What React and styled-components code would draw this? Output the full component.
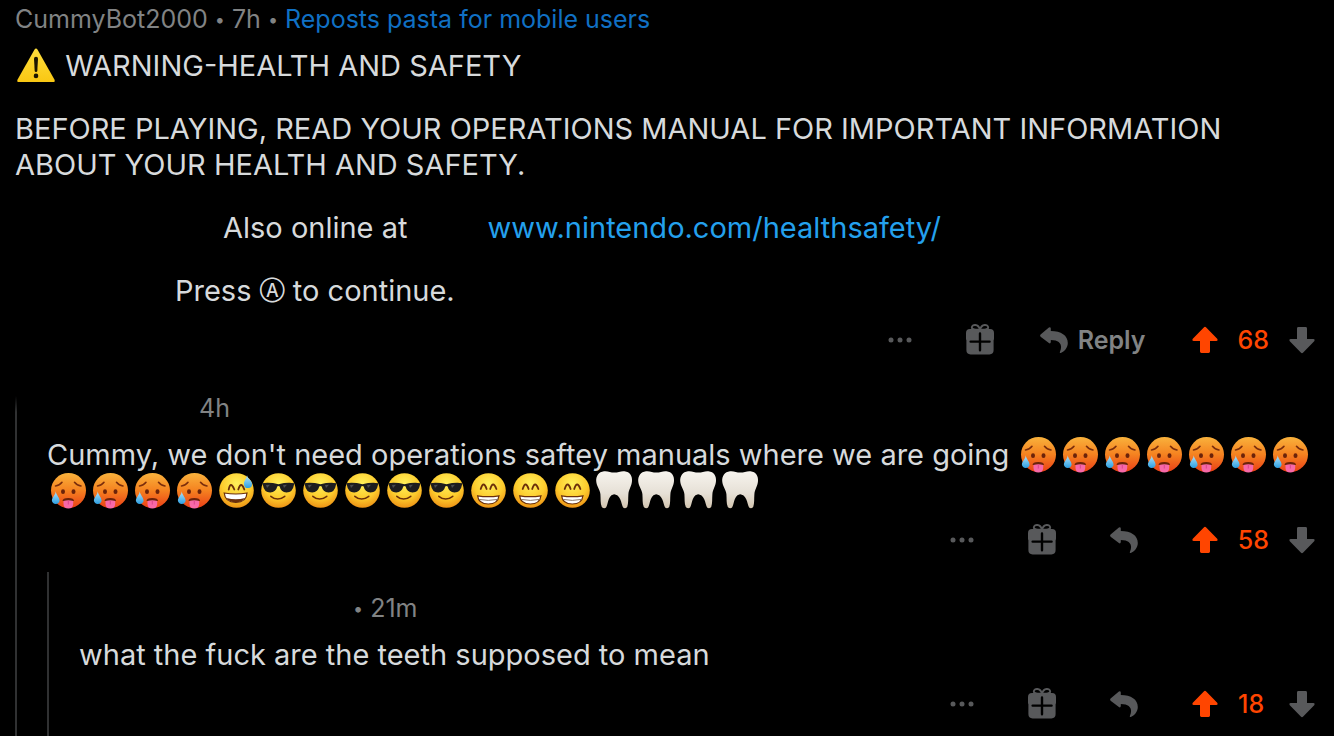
/* eslint-disable react/prop-types */
import React from "react";
import styled, { createGlobalStyle } from "styled-components";

const GlobalStyle = createGlobalStyle`
  * {
    box-sizing: border-box;
  }
  body {
    margin: 0;
    background: #000;
    color: #d7dadc;
    font-family: Inter, "Liberation Sans", sans-serif;
  }
`;

const OUTLINE = "#6b2f0a";

// shared by every emoji on the page
function EmojiPaints() {
  return (
    <HiddenSvg width="0" height="0" aria-hidden="true">
      <defs>
        <linearGradient id="hot" x1="0" y1="0" x2="0" y2="1">
          <stop offset="0" stopColor="#f9b23c" />
          <stop offset="0.5" stopColor="#f58220" />
          <stop offset="1" stopColor="#ea3f17" />
        </linearGradient>
        <radialGradient id="sun" cx="0.5" cy="0.3" r="0.72">
          <stop offset="0" stopColor="#fff05a" />
          <stop offset="0.6" stopColor="#fdcb2c" />
          <stop offset="1" stopColor="#ec8f14" />
        </radialGradient>
        <linearGradient id="drop" x1="0" y1="0" x2="0" y2="1">
          <stop offset="0" stopColor="#b5e6fb" />
          <stop offset="1" stopColor="#2c9fe2" />
        </linearGradient>
        <linearGradient id="enamel" x1="0" y1="0" x2="0" y2="1">
          <stop offset="0" stopColor="#f7f4ee" />
          <stop offset="0.6" stopColor="#e6e0d6" />
          <stop offset="1" stopColor="#d3c5b0" />
        </linearGradient>
        <linearGradient id="sign" x1="0" y1="0" x2="0" y2="1">
          <stop offset="0" stopColor="#ffdf3d" />
          <stop offset="1" stopColor="#f9c713" />
        </linearGradient>
      </defs>
    </HiddenSvg>
  );
}

const drawings = {
  hot: (
    <>
      <circle cx="20.5" cy="17.5" r="17.5" fill="url(#hot)" />
      <path d="M7.5 13 Q11.5 12.6 14 9.3 M33 13 Q29 12.6 26.5 9.3" fill="none" stroke="#7a2d0c" strokeWidth="1.6" strokeLinecap="round" />
      <ellipse cx="15" cy="18.7" rx="2" ry="2.4" fill="#6b230a" />
      <ellipse cx="25.5" cy="18.7" rx="2" ry="2.4" fill="#6b230a" />
      <path d="M14.5 28 Q14.5 25 20.3 25 T26 28 Z" fill="#6b230a" />
      <path d="M15.5 28 Q20.3 26.4 25.2 28 V31 Q25 35.6 20.3 35.6 T15.5 31 Z" fill="#f768a8" />
      <path d="M20.3 28 V31.5" stroke="#d8428a" strokeWidth="0.9" />
      <path d="M7.8 18.3 C8.2 22.5 11.6 24 11.6 27.8 A3.9 3.7 0 0 1 3.9 27.8 C3.9 24 7.4 22.5 7.8 18.3 Z" fill="url(#drop)" />
    </>
  ),
  sweat: (
    <>
      <circle cx="20.5" cy="17.5" r="17.3" fill="url(#sun)" />
      <path d="M12.7 16.5 Q14.5 7.5 18.3 16.5 M22.3 16.5 Q25 7.5 28.3 16.5" fill="none" stroke={OUTLINE} strokeWidth="1.8" strokeLinecap="round" />
      <path d="M8.2 20 Q20 22 31 20 Q30.5 29.4 19.8 29.4 Q9 29.4 8.2 20 Z" fill="#fff" stroke={OUTLINE} strokeWidth="1.2" />
      <path d="M10.5 25 Q19.8 27.5 29 25 Q26 29.4 19.8 29.4 Q13.5 29.4 10.5 25 Z" fill={OUTLINE} />
      <path d="M31 2.3 C31.6 6 36 7.3 36 11 A4 3.9 0 0 1 28 11.4 C27.5 8 30.5 6 31 2.3 Z" fill="url(#drop)" />
    </>
  ),
  cool: (
    <>
      <circle cx="20.5" cy="17.5" r="17.3" fill="url(#sun)" />
      <path d="M4.2 10.2 Q12 9.2 20.5 11.2 Q29 9.2 36.3 10.2 L35.8 12.6 Q34.8 19.4 28.5 19.4 Q22.8 19.4 21.7 13.6 Q20.4 12.4 19.2 13.6 Q18 19.4 12.2 19.4 Q6 19.4 5 12.6 Z" fill="#1d1d1f" />
      <path d="M8 12 L12 11.8 L9 15 Z M25 12 L29 11.8 L26 15 Z" fill="#4a4b4f" />
      <path d="M12.8 23.3 Q19.5 28.8 26.8 23.3" fill="none" stroke={OUTLINE} strokeWidth="1.5" strokeLinecap="round" />
    </>
  ),
  grin: (
    <>
      <circle cx="20.5" cy="17.5" r="17.3" fill="url(#sun)" />
      <path d="M12.7 16 Q15.5 7 18.6 16 M22.2 16 Q25 7 28.4 16" fill="none" stroke={OUTLINE} strokeWidth="1.8" strokeLinecap="round" />
      <path d="M9.6 22.8 Q20 24.6 31 22.8 Q30 31 20.3 31 Q10.4 31 9.6 22.8 Z" fill="#fff" stroke={OUTLINE} strokeWidth="1.2" />
      <path d="M10.8 26.4 Q20.3 28.4 29.8 26.4" fill="none" stroke="#8b7a6c" strokeWidth="1" />
    </>
  ),
  tooth: (
    <path
      d="M10 -1.8 C14 -2.2 16.5 -0.6 20.3 -0.4 C24 -0.6 27 -2.2 30.5 -1.8 C36 -1.2 38.4 3 38 8 C37.6 13.5 34.8 16 34.4 21 C34 26 34.6 30 33.2 34 Q32.4 35.6 29.8 35 C27.4 34 27.8 22.5 21 21.4 Q20.2 21.2 19.4 21.4 C13.4 22.5 14 34 11.4 35 Q8.6 35.6 7.8 34 C6.2 30 6.8 26 6.4 21 C5.8 16 2.6 13.5 2.2 8 C2 3 4.6 -1.2 10 -1.8 Z"
      fill="url(#enamel)"
    />
  ),
  warning: (
    <>
      <path d="M18.4 1.8 Q20 -0.6 21.6 1.8 L38.4 31.4 Q39.6 34 37 34 H3 Q0.4 34 1.6 31.4 Z" fill="url(#sign)" />
      <path d="M18 10.4 Q18 8.8 20 8.8 T22 10.4 L21.3 23 Q21.2 24 20 24 T18.7 23 Z" fill="#1c1600" />
      <circle cx="20" cy="27.9" r="2.3" fill="#1c1600" />
    </>
  ),
};

function Emoji({ name }) {
  return (
    <EmojiSvg viewBox="-1 0 42 36" role="img" aria-label={name}>
      {drawings[name]}
    </EmojiSvg>
  );
}

function EmojiRun({ name, count }) {
  return Array.from({ length: count }, (_, i) => <Emoji key={i} name={name} />);
}

function MoreIcon() {
  return (
    <svg width="24" height="8" viewBox="0 0 24 8" fill="currentColor">
      <circle cx="3" cy="4" r="2.5" />
      <circle cx="12" cy="4" r="2.5" />
      <circle cx="21" cy="4" r="2.5" />
    </svg>
  );
}

function GiftIcon() {
  return (
    <svg width="28" height="32" viewBox="0 0 28 32">
      <path d="M14 5.6 C11 5.6 5.8 6 5.8 3.6 C6 0 12.4 -0.4 14 5.6 C15.6 -0.4 22 0 22.2 3.6 C22.2 6 17 5.6 14 5.6 Z" fill="none" stroke="currentColor" strokeWidth="1.9" />
      <path d="M4 5 H24 Q28 5 28 9 V14.5 Q28 15.6 27.6 16.2 V26 Q27.6 30.4 23.4 30.4 H4.6 Q0.4 30.4 0.4 26 V16.2 Q0 15.6 0 14.5 V9 Q0 5 4 5 Z" fill="currentColor" />
      <path d="M14 9.4 V26.2 M4.6 17.6 H23.6" stroke="#000" strokeWidth="2.4" strokeLinecap="round" />
    </svg>
  );
}

function ReplyIcon() {
  return (
    <svg width="28" height="26" viewBox="0 0 28 26" fill="currentColor">
      <path d="M0.6 7.4 L8.9 0.6 Q10.6 -0.4 10.8 1.6 V4 C21 4 27.8 8.4 27.8 16 C27.8 20.6 24.4 24.6 20.8 25.9 Q19.4 26.2 19.9 24.9 C22.6 19 21.2 13.2 10.8 13 V15 Q10.6 17 8.9 16.1 L0.6 9.8 Q-0.4 8.6 0.6 7.4 Z" />
    </svg>
  );
}

function ArrowIcon({ down }) {
  return (
    <svg width="26" height="28" viewBox="0 0 26 28" fill="currentColor">
      <path
        transform={down ? "rotate(180 13 14)" : undefined}
        d="M11.8 1.4 Q13 0.2 14.2 1.4 L25.2 12.8 Q26.4 14.8 24.2 15 H18 V25.6 Q18 27 16.6 27 H9.4 Q8 27 8 25.6 V15 H1.8 Q-0.4 14.8 0.8 12.8 Z"
      />
    </svg>
  );
}

function Actions({ score, labelled }) {
  return (
    <ActionBar $gap={labelled ? 46 : 54}>
      <MoreButton aria-label="More" $labelled={labelled}>
        <MoreIcon />
      </MoreButton>
      <IconButton aria-label="Give award">
        <GiftIcon />
      </IconButton>
      <IconButton aria-label="Reply">
        <ReplyIcon />
        {labelled && <span>Reply</span>}
      </IconButton>
      <Votes>
        <IconButton aria-label="Upvote" $active>
          <ArrowIcon />
        </IconButton>
        <Score>{score}</Score>
        <IconButton aria-label="Downvote">
          <ArrowIcon down />
        </IconButton>
      </Votes>
    </ActionBar>
  );
}

function App() {
  return (
    <>
      <GlobalStyle />
      <EmojiPaints />
      <Page>
        <article>
          <Meta>
            CummyBot2000 <Dot>•</Dot> 7h <Dot>•</Dot>{" "}
            <Flair href="#flair">Reposts pasta for mobile users</Flair>
          </Meta>
          <Body>
            <p>
              <Emoji name="warning" /> WARNING-HEALTH AND SAFETY
            </p>
            <p>
              BEFORE PLAYING, READ YOUR OPERATIONS MANUAL FOR IMPORTANT INFORMATION ABOUT YOUR
              HEALTH AND SAFETY.
            </p>
            <Indented $indent={208}>
              Also online at
              <Link href="#healthsafety">www.nintendo.com/healthsafety/</Link>
            </Indented>
            <Indented $indent={160}>
              <span>
                Press <Circled>Ⓐ</Circled> to continue.
              </span>
            </Indented>
          </Body>
          <Actions score={68} labelled />
        </article>

        <Thread $fade>
          <Meta $indent={152}>4h</Meta>
          <Body>
            <p>
              Cummy, we don&apos;t need operations saftey manuals where we are going{" "}
              <EmojiRun name="hot" count={11} />
              <EmojiRun name="sweat" count={1} />
              <EmojiRun name="cool" count={5} />
              <EmojiRun name="grin" count={3} />
              <EmojiRun name="tooth" count={4} />
            </p>
          </Body>
          <Actions score={58} />

          <Thread>
            <Meta $indent={274}>
              <Dot>•</Dot> 21m
            </Meta>
            <Body>
              <p>what the fuck are the teeth supposed to mean</p>
            </Body>
            <Actions score={18} />
          </Thread>
        </Thread>
      </Page>
    </>
  );
}

const HiddenSvg = styled.svg`
  position: absolute;
`;

const EmojiSvg = styled.svg`
  display: inline-block;
  width: 42px;
  height: 36px;
  vertical-align: top;
  overflow: visible;
`;

const Page = styled.main`
  min-height: 100vh;
  padding: 3px 0 0 15px;
`;

const Meta = styled.header`
  padding-left: ${({ $indent = 0 }) => $indent}px;
  font-size: 25px;
  line-height: 32px;
  color: #818384;
`;

const Dot = styled.span`
  font-size: 18px;
  line-height: 18px;
  vertical-align: 2px;
`;

const Flair = styled.a`
  color: #1070c4;
  text-decoration: none;
`;

const Body = styled.div`
  display: flex;
  flex-direction: column;
  gap: 27px;
  margin: 13px 0 15px;
  padding-right: 16px;
  font-size: 29px;
  line-height: 36px;
  p {
    margin: 0;
  }
`;

const Indented = styled.p`
  display: flex;
  gap: 80px;
  padding-left: ${({ $indent }) => $indent}px;
`;

const Circled = styled.span`
  font-size: 18px;
  font-weight: 500;
  line-height: 18px;
  vertical-align: 4px;
`;

const Link = styled.a`
  color: #24a0ed;
  text-decoration: none;
`;

const ActionBar = styled.div`
  display: flex;
  justify-content: flex-end;
  align-items: center;
  gap: ${({ $gap }) => $gap}px;
  height: 32px;
  padding-right: 19px;
`;

const IconButton = styled.button`
  display: flex;
  align-items: center;
  gap: 10px;
  padding: 0;
  border: 0;
  background: none;
  color: ${({ $active }) => ($active ? "#ff4500" : "#58595b")};
  font: inherit;
  font-size: 25px;
  font-weight: 600;
  line-height: 32px;
  cursor: pointer;
  span {
    color: #818384;
  }
`;

const MoreButton = styled(IconButton)`
  margin-right: ${({ $labelled }) => ($labelled ? 8 : 0)}px;
`;

const Votes = styled.div`
  display: flex;
  align-items: center;
  gap: 20px;
`;

const Score = styled.span`
  min-width: 31px;
  color: #ff4500;
  font-size: 25px;
  font-weight: 500;
  line-height: 32px;
`;

const Thread = styled.section`
  margin-top: 16px;
  padding: 20px 0 0 32px;
  background: linear-gradient(
      ${({ $fade }) => ($fade ? "transparent 24px, #303132 40px" : "#303132, #303132")}
    )
    left top / 2px 100% no-repeat;
  & & {
    padding-bottom: 16px;
  }
`;

export default App;
